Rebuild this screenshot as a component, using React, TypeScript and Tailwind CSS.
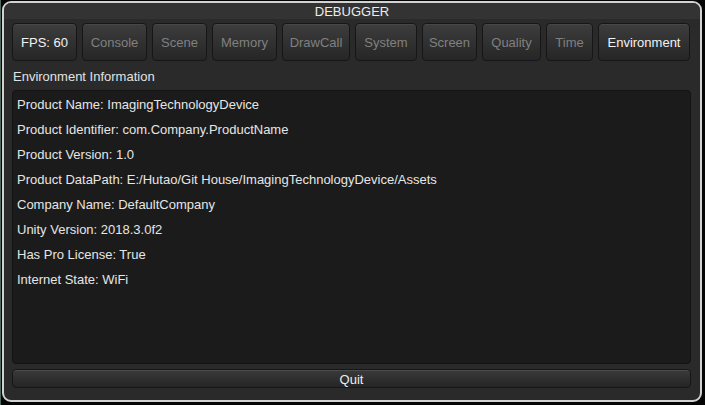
const tabs = [
  { label: "FPS: 60", w: "w-[65px]", active: true },
  { label: "Console", w: "w-[65px]", active: false },
  { label: "Scene", w: "w-[55px]", active: false },
  { label: "Memory", w: "w-[65px]", active: false },
  { label: "DrawCall", w: "w-[68px]", active: false },
  { label: "System", w: "w-[62px]", active: false },
  { label: "Screen", w: "w-[55px]", active: false },
  { label: "Quality", w: "w-[59px]", active: false },
  { label: "Time", w: "w-[47px]", active: false },
  { label: "Environment", w: "w-[92px]", active: true },
];

const info = [
  "Product Name: ImagingTechnologyDevice",
  "Product Identifier: com.Company.ProductName",
  "Product Version: 1.0",
  "Product DataPath: E:/Hutao/Git House/ImagingTechnologyDevice/Assets",
  "Company Name: DefaultCompany",
  "Unity Version: 2018.3.0f2",
  "Has Pro License: True",
  "Internet State: WiFi",
];

const App = () => {
  return (
    <div className="flex h-[405px] w-[705px] bg-[#050505] font-['Liberation_Sans',Arial,sans-serif] text-[13px]">
      <div className="w-[1px] bg-[#4d6b5c]" />
      <div className="ml-[1px] mt-[1px] flex h-[401px] w-[700px] flex-col overflow-hidden rounded-[9px] border-2 border-[#d2d2d2] bg-[#2a2a2a]">
        <div className="flex h-[16px] items-center justify-center bg-[#333333] leading-none text-[#ececec]">
          DEBUGGER
        </div>

        <div className="flex flex-col px-[8px]">
          <div className="mt-[4px] flex gap-[5px]">
            {tabs.map((t) => (
              <div
                key={t.label}
                className={`flex h-[38px] ${t.w} items-center justify-center rounded-[4px] border border-[#161616] bg-gradient-to-b from-[#3d3d3d] to-[#262626] pt-[1px] shadow-[inset_0_1px_0_#474747] ${t.active ? "text-[#f2f2f2]" : "text-[#808080]"}`}
              >
                {t.label}
              </div>
            ))}
          </div>

          <div className="flex h-[29px] items-center pl-[1px] pt-[2px] text-[#e2e2e2]">
            Environment Information
          </div>

          <div className="flex h-[274px] w-[679px] flex-col rounded-[4px] border border-[#131313] bg-[#1b1b1b] pl-[4px] pt-[1px] text-[#e6e6e6]">
            {info.map((line) => (
              <p key={line} className="leading-[25px]">
                {line}
              </p>
            ))}
          </div>

          <div className="mt-[5px] flex h-[19px] w-[679px] items-center justify-center rounded-[4px] border border-[#161616] bg-gradient-to-b from-[#3a3a3a] to-[#252525] pt-[1px] leading-none text-[#ececec] shadow-[inset_0_1px_0_#4c4c4c]">
            Quit
          </div>
        </div>
      </div>
    </div>
  );
};

export default App;
